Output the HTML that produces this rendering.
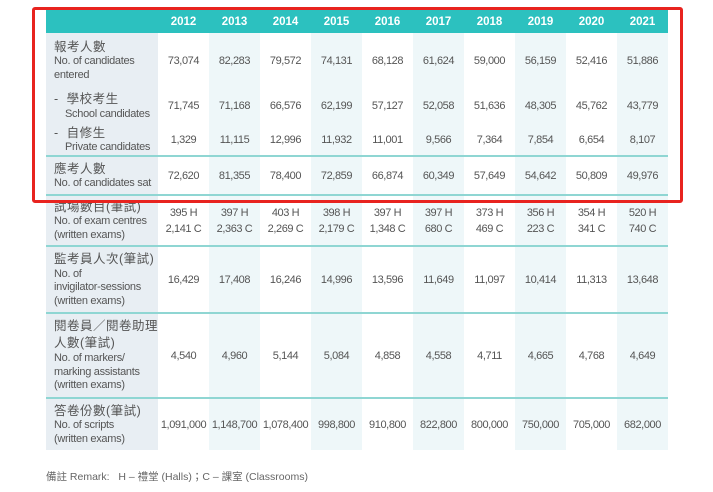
<!DOCTYPE html><html><head><meta charset="utf-8"><style>
body{margin:0;width:713px;height:492px;background:#fff;overflow:hidden;font-family:"Liberation Sans","Noto Sans CJK TC",sans-serif;color:#555;}
table{position:absolute;left:46px;top:10px;border-collapse:collapse;table-layout:fixed;width:622px;}
td,th{padding:0;font-size:11px;text-align:center;vertical-align:middle;letter-spacing:-0.4px;white-space:nowrap;line-height:16px}
th{background:#2cc1bf;color:#fff;font-weight:bold;height:23px;font-size:11.5px;letter-spacing:0}
td.l{background:#e8eef3;text-align:left;padding-left:8px;font-size:11px;line-height:13.5px;letter-spacing:-0.3px;overflow:hidden}
td.l .c{font-size:12.5px;letter-spacing:0.5px;line-height:16px}
col.o{background:#eef7f9}
tr.b td{border-bottom:2px solid #8fd6d3}
.box{position:absolute;left:32px;top:7px;width:645px;height:190px;border:3px solid #e8231f;border-radius:3px}
.rem{position:absolute;left:46px;top:469px;font-size:10.5px;color:#666}
</style></head><body>
<table>
<col style="width:112px"><col><col class="o"><col><col class="o"><col><col class="o"><col><col class="o"><col><col class="o">
<tr><th></th><th>2012</th><th>2013</th><th>2014</th><th>2015</th><th>2016</th><th>2017</th><th>2018</th><th>2019</th><th>2020</th><th>2021</th></tr>
<tr style="height:55px"><td class="l"><span class="c">報考人數</span><br>No. of candidates<br>entered</td><td>73,074</td><td>82,283</td><td>79,572</td><td>74,131</td><td>68,128</td><td>61,624</td><td>59,000</td><td>56,159</td><td>52,416</td><td>51,886</td></tr>
<tr style="height:36px"><td class="l"><span class="c">-&nbsp; 學校考生</span><br>&nbsp;&nbsp;&nbsp;&nbsp;School candidates</td><td>71,745</td><td>71,168</td><td>66,576</td><td>62,199</td><td>57,127</td><td>52,058</td><td>51,636</td><td>48,305</td><td>45,762</td><td>43,779</td></tr>
<tr style="height:32px" class="b"><td class="l"><span class="c">-&nbsp; 自修生</span><br>&nbsp;&nbsp;&nbsp;&nbsp;Private candidates</td><td>1,329</td><td>11,115</td><td>12,996</td><td>11,932</td><td>11,001</td><td>9,566</td><td>7,364</td><td>7,854</td><td>6,654</td><td>8,107</td></tr>
<tr style="height:39px" class="b"><td class="l"><span class="c">應考人數</span><br>No. of candidates sat</td><td>72,620</td><td>81,355</td><td>78,400</td><td>72,859</td><td>66,874</td><td>60,349</td><td>57,649</td><td>54,642</td><td>50,809</td><td>49,976</td></tr>
<tr style="height:51px" class="b"><td class="l"><span class="c">試場數目(筆試)</span><br>No. of exam centres<br>(written exams)</td><td>395 H<br>2,141 C</td><td>397 H<br>2,363 C</td><td>403 H<br>2,269 C</td><td>398 H<br>2,179 C</td><td>397 H<br>1,348 C</td><td>397 H<br>680 C</td><td>373 H<br>469 C</td><td>356 H<br>223 C</td><td>354 H<br>341 C</td><td>520 H<br>740 C</td></tr>
<tr style="height:67px" class="b"><td class="l"><span class="c">監考員人次(筆試)</span><br>No. of<br>invigilator-sessions<br>(written exams)</td><td>16,429</td><td>17,408</td><td>16,246</td><td>14,996</td><td>13,596</td><td>11,649</td><td>11,097</td><td>10,414</td><td>11,313</td><td>13,648</td></tr>
<tr style="height:85px" class="b"><td class="l"><span class="c" style="line-height:17px">閱卷員／閱卷助理<br>人數(筆試)</span><br>No. of markers/<br>marking assistants<br>(written exams)</td><td>4,540</td><td>4,960</td><td>5,144</td><td>5,084</td><td>4,858</td><td>4,558</td><td>4,711</td><td>4,665</td><td>4,768</td><td>4,649</td></tr>
<tr style="height:52px"><td class="l"><span class="c">答卷份數(筆試)</span><br>No. of scripts<br>(written exams)</td><td>1,091,000</td><td>1,148,700</td><td>1,078,400</td><td>998,800</td><td>910,800</td><td>822,800</td><td>800,000</td><td>750,000</td><td>705,000</td><td>682,000</td></tr>
</table>
<div class="box"></div>
<div class="rem">備註 Remark:&nbsp;&nbsp; H – 禮堂 (Halls)；C – 課室 (Classrooms)</div>
</body></html>
